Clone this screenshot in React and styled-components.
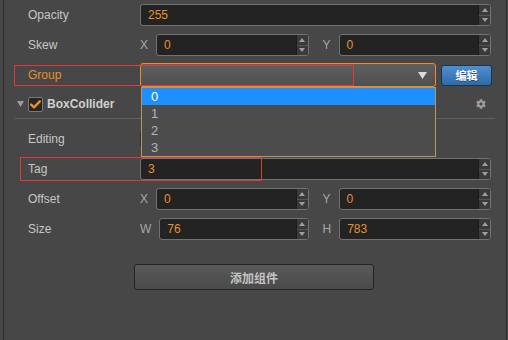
import React from 'react';
import styled, { createGlobalStyle } from 'styled-components';
import { FaCog } from 'react-icons/fa';

const GlobalStyle = createGlobalStyle`
  html, body {
    margin: 0;
    padding: 0;
    background: #474747;
  }
  body {
    font-family: 'Liberation Sans', Arial, 'Noto Sans CJK SC', sans-serif;
    font-size: 12px;
  }
  * {
    box-sizing: border-box;
  }
`;

const Inspector = () => {
  return (
    <Panel>
      <Row>
        <Label>Opacity</Label>
        <NumberField value="255" />
      </Row>
      <Row>
        <Label>Skew</Label>
        <VectorField a="X" av="0" b="Y" bv="0" />
      </Row>
      <Row>
        <Label $active>Group</Label>
        <GroupValue>
          <Select>
            <SelectArrow width="9" height="7" viewBox="0 0 9 7">
              <path d="M0 0 H9 L4.5 7 Z" fill="#dcdcdc" />
            </SelectArrow>
            <OptionList>
              {['0', '1', '2', '3'].map((o, i) => (
                <OptionItem key={o} $selected={i === 0}>
                  {o}
                </OptionItem>
              ))}
            </OptionList>
          </Select>
          <EditButton>编辑</EditButton>
        </GroupValue>
        <RedBox $left={10} $top={5} $width={340} $height={21} />
      </Row>

      <ComponentHeader>
        <Fold width="7" height="6" viewBox="0 0 7 6">
          <path d="M0 0 H7 L3.5 6 Z" fill="#9c9c9c" />
        </Fold>
        <Checkbox>
          <svg width="11" height="9" viewBox="0 0 11 9">
            <path
              d="M1.2 4.6 L4 7.3 L9.8 1.3"
              stroke="#f0901e"
              strokeWidth="2.4"
              fill="none"
              strokeLinecap="round"
              strokeLinejoin="round"
            />
          </svg>
        </Checkbox>
        <ComponentTitle>BoxCollider</ComponentTitle>
        <Gear />
      </ComponentHeader>
      <Divider />

      <Row>
        <Label>Editing</Label>
        <div>
          <SmallButton>Edit</SmallButton>
        </div>
      </Row>
      <Row>
        <Label>Tag</Label>
        <NumberField value="3" />
        <RedBox $left={16} $top={3} $width={242} $height={24} />
      </Row>
      <Row>
        <Label>Offset</Label>
        <VectorField a="X" av="0" b="Y" bv="0" />
      </Row>
      <Row>
        <Label>Size</Label>
        <VectorField a="W" av="76" b="H" bv="783" />
      </Row>

      <Footer>
        <AddButton>添加组件</AddButton>
      </Footer>
    </Panel>
  );
};

const NumberField = ({ value }) => (
  <Field>
    <Value>{value}</Value>
    <Spinner>
      <SpinButton>
        <svg width="6" height="4" viewBox="0 0 6 4">
          <path d="M0 4 L3 0 L6 4 Z" fill="#a0a0a0" />
        </svg>
      </SpinButton>
      <SpinButton>
        <svg width="6" height="4" viewBox="0 0 6 4">
          <path d="M0 0 L6 0 L3 4 Z" fill="#a0a0a0" />
        </svg>
      </SpinButton>
    </Spinner>
  </Field>
);

const VectorField = ({ a, av, b, bv }) => (
  <Vector>
    <Axis>
      <AxisLabel>{a}</AxisLabel>
      <NumberField value={av} />
    </Axis>
    <Axis>
      <AxisLabel>{b}</AxisLabel>
      <NumberField value={bv} />
    </Axis>
  </Vector>
);

export default function App() {
  return (
    <>
      <GlobalStyle />
      <Inspector />
    </>
  );
}

const Panel = styled.div`
  width: 504px;
  height: 340px;
  margin-left: 3px;
  border-left: 1px solid #2d2d2d;
  border-right: 1px solid #2d2d2d;
  background: #474747;
`;

const Row = styled.div`
  position: relative;
  display: grid;
  grid-template-columns: 112px 351px;
  align-items: center;
  height: 30px;
  padding-left: 24px;
`;

const Label = styled.div`
  color: ${({ $active }) => ($active ? '#ea8c2a' : '#c6c6c6')};
  font-size: 12px;
`;

const Field = styled.div`
  display: flex;
  height: 22px;
  border: 1px solid #727272;
  border-radius: 3px;
  background: #232323;
  overflow: hidden;
  flex: 1;
  min-width: 0;
`;

const Value = styled.div`
  flex: 1;
  padding-left: 7px;
  line-height: 20px;
  color: #e8902e;
  font-size: 12px;
`;

const Spinner = styled.div`
  width: 12px;
  display: flex;
  flex-direction: column;
  border-left: 1px solid #1c1c1c;
  background: #3a3a3a;
`;

const SpinButton = styled.div`
  flex: 1;
  display: flex;
  align-items: center;
  justify-content: center;

  & + & {
    border-top: 1px solid #555;
  }
`;

const Vector = styled.div`
  display: flex;
  gap: 14px;
`;

const Axis = styled.div`
  flex: 1;
  display: flex;
  align-items: center;
  gap: 8px;
  min-width: 0;
`;

const AxisLabel = styled.span`
  color: #a6a6a6;
  font-size: 12px;
`;

const GroupValue = styled.div`
  display: flex;
  align-items: center;
  gap: 5px;
`;

const Select = styled.div`
  position: relative;
  flex-shrink: 0;
  width: 296px;
  height: 24px;
  border: 1px solid #f08a22;
  border-radius: 3px;
  background: linear-gradient(#5f5f5f, #4f4f4f);
  display: flex;
  align-items: center;
  justify-content: flex-end;
  padding-right: 8px;
`;

const SelectArrow = styled.svg`
  display: block;
`;

const OptionList = styled.div`
  position: absolute;
  z-index: 10;
  top: 23px;
  left: 0;
  width: 295px;
  border: 1px solid #b99660;
  background: #4c4c4c;
`;

const OptionItem = styled.div`
  height: 17px;
  line-height: 17px;
  padding-left: 9px;
  font-size: 13px;
  color: ${({ $selected }) => ($selected ? '#ffffff' : '#aab5c0')};
  background: ${({ $selected }) => ($selected ? '#1e8ffe' : 'transparent')};
`;

const EditButton = styled.button`
  flex-shrink: 0;
  width: 51px;
  height: 21px;
  padding: 0;
  border: 1px solid #1c344e;
  border-radius: 3px;
  background: linear-gradient(#4e8fd0, #2f6aa7);
  color: #ffffff;
  font-family: 'Noto Sans CJK SC', sans-serif;
  font-weight: 700;
  font-size: 11px;
  text-shadow: 0 1px 0 rgba(0, 0, 0, 0.4);
`;

const RedBox = styled.div`
  position: absolute;
  z-index: 5;
  pointer-events: none;
  left: ${({ $left }) => $left}px;
  top: ${({ $top }) => $top}px;
  width: ${({ $width }) => $width}px;
  height: ${({ $height }) => $height}px;
  border: 1px solid #e43838;
`;

const ComponentHeader = styled.div`
  display: flex;
  align-items: center;
  height: 28px;
  padding-left: 13px;
  padding-right: 20px;
`;

const Fold = styled.svg`
  display: block;
  margin-right: 4px;
`;

const Checkbox = styled.div`
  width: 15px;
  height: 15px;
  border: 1px solid #7a7a7a;
  border-radius: 2px;
  background: #262626;
  display: flex;
  align-items: center;
  justify-content: center;
`;

const ComponentTitle = styled.span`
  margin-left: 4px;
  color: #d0d0d0;
  font-weight: 700;
  font-size: 12px;
`;

const Gear = styled(FaCog)`
  margin-left: auto;
  width: 10px;
  height: 10px;
  color: #9d9d9d;
`;

const Divider = styled.div`
  height: 1px;
  margin: 0 11px 5px 11px;
  background: #606060;
`;

const SmallButton = styled.button`
  height: 16px;
  width: 70px;
  padding: 0;
  border: 1px solid #2e2e2e;
  border-radius: 2px;
  background: #5c5c5c;
  color: #cccccc;
  font-family: 'Liberation Sans', Arial, sans-serif;
  font-size: 11px;
`;

const Footer = styled.div`
  display: flex;
  justify-content: center;
  margin-top: 20px;
  padding-right: 2px;
`;

const AddButton = styled.button`
  width: 240px;
  height: 26px;
  border: 1px solid #232323;
  border-radius: 3px;
  background: linear-gradient(#595959, #4a4a4a);
  color: #c4c4c4;
  font-family: 'Noto Sans CJK SC', sans-serif;
  font-weight: 700;
  font-size: 12px;
`;
